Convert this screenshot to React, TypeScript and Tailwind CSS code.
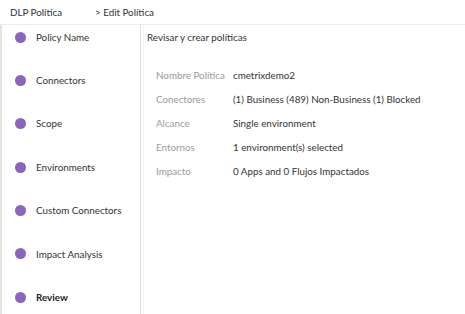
import React from "react";

const steps = [
  "Policy Name",
  "Connectors",
  "Scope",
  "Environments",
  "Custom Connectors",
  "Impact Analysis",
  "Review",
];

const rows: [string, string][] = [
  ["Nombre Política", "cmetrixdemo2"],
  ["Conectores", "(1) Business (489) Non-Business (1) Blocked"],
  ["Alcance", "Single environment"],
  ["Entornos", "1 environment(s) selected"],
  ["Impacto", "0 Apps and 0 Flujos Impactados"],
];

export default function App() {
  return (
    <div
      className="w-[465px] h-[314px] bg-white overflow-hidden flex flex-col text-[9.8px] text-[#333] whitespace-nowrap"
      style={{ fontFamily: 'Lato, "Noto Sans", sans-serif' }}
    >
      <div className="h-[25px] shrink-0 flex items-center border-b border-[#ececec]">
        <span className="pl-[10px] w-[95px]">DLP Política</span>
        <span>&gt; Edit Política</span>
      </div>
      <div className="flex flex-1 min-h-0">
        <div className="w-[141px] shrink-0 border-l-2 border-[#e4e4e4] border-r border-r-[#dcdcdc] flex flex-col gap-[19.4px]">
          {steps.map((s, i) => (
            <div key={s} className="h-[24px] flex items-center pl-[13px] gap-[10px]">
              <span className="w-[11px] h-[11px] rounded-full bg-[#8a64bd] shrink-0" />
              <span className={i === steps.length - 1 ? "text-[#222] font-bold" : ""}>{s}</span>
            </div>
          ))}
        </div>
        <div className="flex-1 pl-[3px] border-l border-[#f3f3f3] ml-[2px]">
          <div className="h-[24px] flex items-center">Revisar y crear políticas</div>
          <div className="mt-[14px] pl-[9px] flex flex-col">
            {rows.map(([k, v]) => (
              <div key={k} className="h-[24px] flex items-center">
                <span className="w-[77px] text-[#9a9a9a]">{k}</span>
                <span>{v}</span>
              </div>
            ))}
          </div>
        </div>
      </div>
    </div>
  );
}
